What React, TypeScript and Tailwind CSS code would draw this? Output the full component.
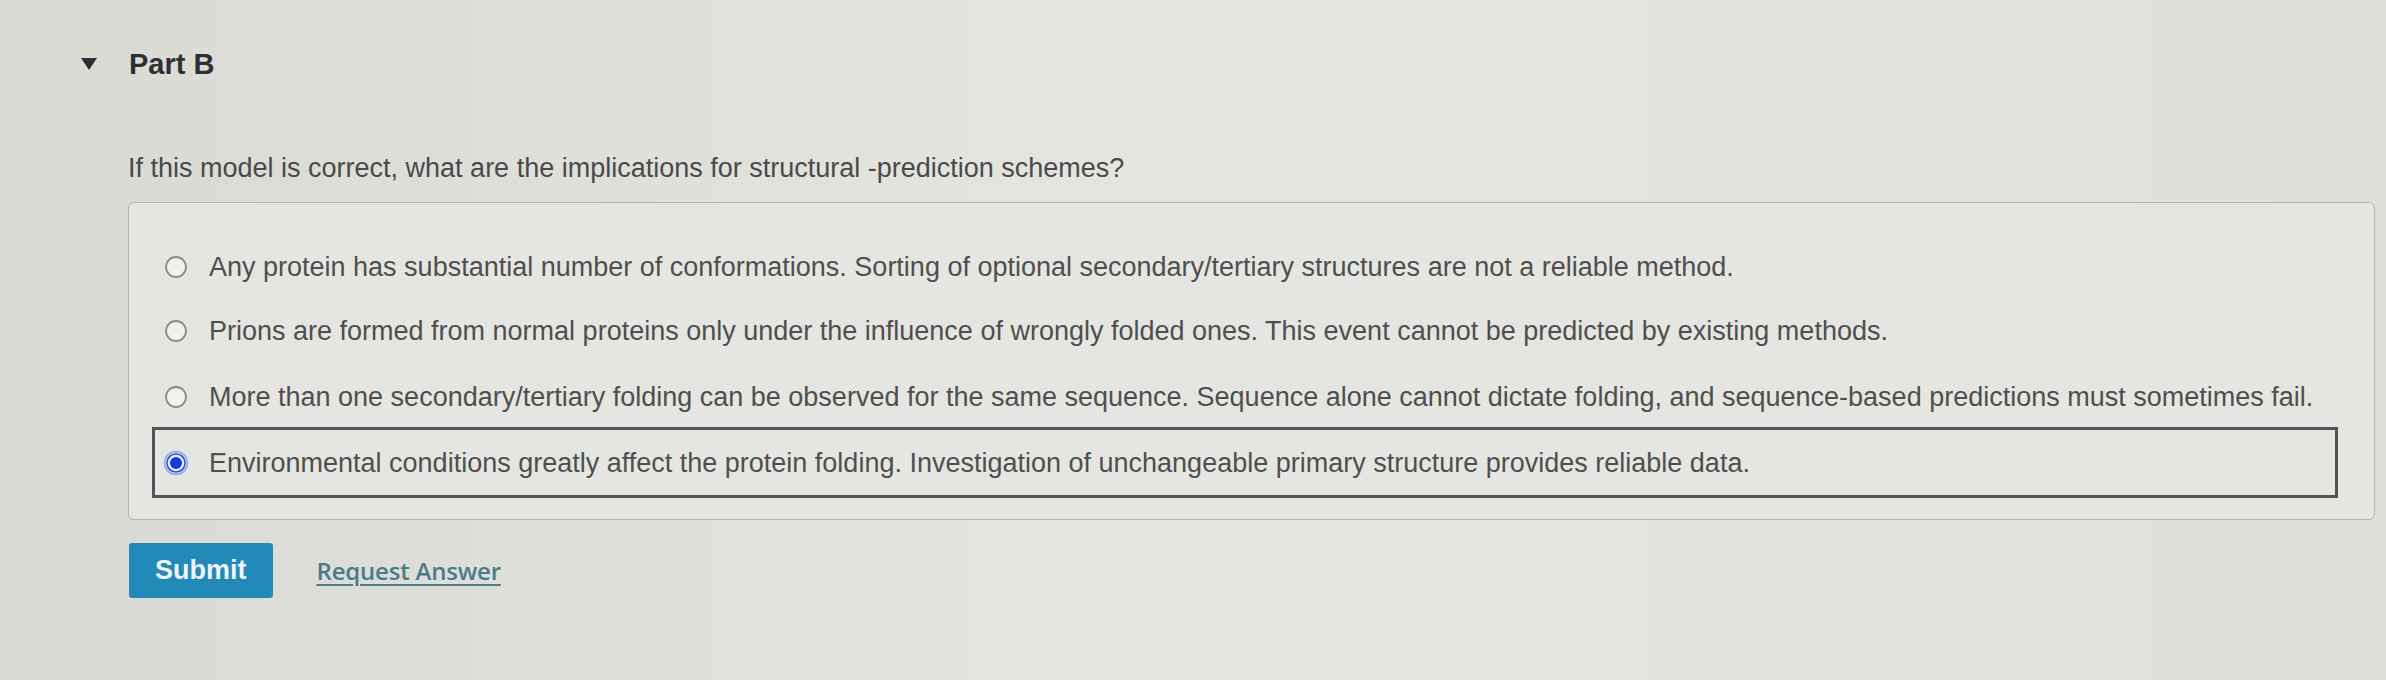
const options = [
  'Any protein has substantial number of conformations. Sorting of optional secondary/tertiary structures are not a reliable method.',
  'Prions are formed from normal proteins only under the influence of wrongly folded ones. This event cannot be predicted by existing methods.',
  'More than one secondary/tertiary folding can be observed for the same sequence. Sequence alone cannot dictate folding, and sequence-based predictions must sometimes fail.',
  'Environmental conditions greatly affect the protein folding. Investigation of unchangeable primary structure provides reliable data.',
];

function Radio({ checked }: { checked: boolean }) {
  if (checked) {
    return (
      <svg width="26" height="26" viewBox="0 0 26 26" className="shrink-0">
        <circle cx="13" cy="13" r="11.5" fill="#c9d4f3" stroke="#8ea6ec" strokeWidth="1.5" />
        <circle cx="13" cy="13" r="9" fill="#f4f4f2" stroke="#2a4fe0" strokeWidth="1.5" />
        <circle cx="13" cy="13" r="6" fill="#1438e8" />
      </svg>
    );
  }
  return (
    <svg width="26" height="26" viewBox="0 0 26 26" className="shrink-0">
      <circle cx="13" cy="13" r="10" fill="#f1f1ee" stroke="#8b8b8b" strokeWidth="1.8" />
    </svg>
  );
}

export default function App() {
  const selected = 3;

  return (
    <div className="h-[680px] w-full bg-linear-to-r from-[#d9dad3] via-[#e5e6e0] to-[#dfe0da] font-['Liberation_Sans',Arial,sans-serif] text-[#4a4a4a]">
      {/* Header */}
      <div className="flex items-center pt-[46px]">
        <svg width="16" height="12" viewBox="0 0 16 12" className="ml-[81px] mr-[32px]">
          <path d="M0 0 H16 L8 12 Z" fill="#2e2e33" />
        </svg>
        <h2 className="text-[29px] font-bold leading-[36px] text-[#2f2f35]">Part B</h2>
      </div>

      {/* Question */}
      <p className="ml-[128px] mt-[70px] text-[27px] leading-[32px] text-[#4a4a4a]">
        If this model is correct, what are the implications for structural -prediction schemes?
      </p>

      {/* Choices */}
      <div className="ml-[128px] mr-[11px] mt-[18px] rounded-md border border-[#b4b5ae] bg-[#e5e6e1] pt-[32px] pb-[21px]">
        {options.map((text, i) => (
          <label
            key={i}
            className={
              i === selected
                ? 'ml-[23px] mr-[36px] flex h-[71px] items-center gap-[20px] border-[3px] border-[#545458] pl-[8px]'
                : i === 2
                  ? 'ml-[23px] mr-[36px] flex h-[64px] items-center gap-[20px] border-[3px] border-transparent pl-[8px] pt-[4px]'
                  : 'ml-[23px] mr-[36px] flex h-[64px] items-center gap-[20px] border-[3px] border-transparent pl-[8px]'
            }
          >
            <Radio checked={i === selected} />
            <span className="text-[27px] leading-[32px] text-[#4f4f4f]">{text}</span>
          </label>
        ))}
      </div>

      {/* Actions */}
      <div className="ml-[129px] mt-[23px] flex items-center gap-[44px]">
        <button className="h-[55px] rounded-[3px] bg-[#2389b8] px-[26px] text-[27px] font-bold text-[#eef4f6]">
          Submit
        </button>
        <a className="font-['Open_Sans',sans-serif] text-[24px] font-semibold tracking-[-0.2px] text-[#4a7b8c] underline decoration-2 underline-offset-4">
          Request Answer
        </a>
      </div>
    </div>
  );
}
